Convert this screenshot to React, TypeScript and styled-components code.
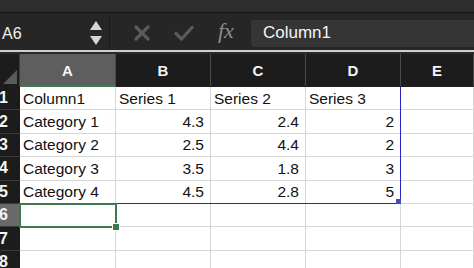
import React from 'react'
import styled, { createGlobalStyle } from 'styled-components'

const GlobalStyle = createGlobalStyle`
  html, body {
    margin: 0;
    padding: 0;
    background: #ffffff;
    overflow: hidden;
  }
  body {
    font-family: 'Liberation Sans', Arial, sans-serif;
  }
`

const COLS = ['A', 'B', 'C', 'D', 'E']

const rows: { label: string; cells: { text: string; num?: boolean }[] }[] = [
  { label: '1', cells: [{ text: 'Column1' }, { text: 'Series 1' }, { text: 'Series 2' }, { text: 'Series 3' }, { text: '' }] },
  { label: '2', cells: [{ text: 'Category 1' }, { text: '4.3', num: true }, { text: '2.4', num: true }, { text: '2', num: true }, { text: '' }] },
  { label: '3', cells: [{ text: 'Category 2' }, { text: '2.5', num: true }, { text: '4.4', num: true }, { text: '2', num: true }, { text: '' }] },
  { label: '4', cells: [{ text: 'Category 3' }, { text: '3.5', num: true }, { text: '1.8', num: true }, { text: '3', num: true }, { text: '' }] },
  { label: '5', cells: [{ text: 'Category 4' }, { text: '4.5', num: true }, { text: '2.8', num: true }, { text: '5', num: true }, { text: '' }] },
  { label: '6', cells: [{ text: '' }, { text: '' }, { text: '' }, { text: '' }, { text: '' }] },
  { label: '7', cells: [{ text: '' }, { text: '' }, { text: '' }, { text: '' }, { text: '' }] },
  { label: '8', cells: [{ text: '' }, { text: '' }, { text: '' }, { text: '' }, { text: '' }] },
]

const App = () => (
  <>
    <GlobalStyle />
    <Window>
      <TopStrip />
      <FormulaBar>
        <NameBox>
          <NameText>A6</NameText>
          <Spinner>
            <svg width="12" height="9" viewBox="0 0 12 9"><polygon points="6,0 12,9 0,9" fill="#d6d6d6" /></svg>
            <svg width="12" height="9" viewBox="0 0 12 9"><polygon points="0,0 12,0 6,9" fill="#d6d6d6" /></svg>
          </Spinner>
        </NameBox>
        <Actions>
          <IconSlot>
            <svg width="18" height="18" viewBox="0 0 18 18">
              <path d="M3 3 L15 15 M15 3 L3 15" stroke="#5b5b5b" strokeWidth="3.2" strokeLinecap="round" />
            </svg>
          </IconSlot>
          <IconSlot>
            <svg width="20" height="18" viewBox="0 0 20 18">
              <path d="M2 9.5 L7.5 15 L18 3.5" stroke="#5b5b5b" strokeWidth="3.2" fill="none" strokeLinecap="round" strokeLinejoin="round" />
            </svg>
          </IconSlot>
          <FxLabel>fx</FxLabel>
        </Actions>
        <FormulaInput>Column1</FormulaInput>
      </FormulaBar>
      <Divider />
      <Sheet>
        <Grid>
          <Corner>
            <svg width="14" height="14" viewBox="0 0 14 14"><polygon points="14,0 14,14 0,14" fill="#5a5a5a" /></svg>
          </Corner>
          {COLS.map((c) => (
            <ColHeader key={c} active={c === 'A'}>{c}</ColHeader>
          ))}
          {rows.map((r) => (
            <React.Fragment key={r.label}>
              <RowHeader active={r.label === '6'}>{r.label}</RowHeader>
              {r.cells.map((cell, i) => (
                <Cell key={i} num={!!cell.num}>{cell.text}</Cell>
              ))}
            </React.Fragment>
          ))}
        </Grid>
        <TableRange>
          <RangeHandle />
        </TableRange>
        <Selection>
          <FillHandle />
        </Selection>
      </Sheet>
    </Window>
  </>
)

const Window = styled.div`
  width: 474px;
  height: 268px;
  overflow: hidden;
  display: flex;
  flex-direction: column;
  background: #ffffff;
`

const TopStrip = styled.div`
  height: 12px;
  flex: none;
  background: #2d2d2d;
  border-bottom: 1px solid #161616;
`

const FormulaBar = styled.div`
  height: 37px;
  flex: none;
  display: flex;
  align-items: center;
  background: #262626;
`

const NameBox = styled.div`
  width: 110px;
  height: 100%;
  box-sizing: border-box;
  display: flex;
  align-items: center;
  justify-content: space-between;
  padding: 0 7px 0 2px;
  border-right: 1px solid #1b1b1b;
`

const NameText = styled.span`
  color: #f2f2f2;
  font-size: 16px;
  padding-top: 4px;
`

const Spinner = styled.div`
  display: flex;
  flex-direction: column;
  gap: 6px;
  padding-top: 2px;
  svg {
    display: block;
  }
`

const Actions = styled.div`
  display: flex;
  align-items: center;
  height: 100%;
  padding-left: 23px;
  padding-top: 2px;
`

const IconSlot = styled.div`
  width: 41px;
  display: flex;
  align-items: center;
  svg {
    display: block;
  }
`

const FxLabel = styled.span`
  font-family: 'Liberation Serif', 'Times New Roman', serif;
  font-style: italic;
  font-size: 22px;
  color: #8c8c8c;
  margin-left: 3px;
  width: 33px;
  padding-bottom: 3px;
`

const FormulaInput = styled.div`
  flex: 1;
  height: 27px;
  margin-top: 3px;
  box-sizing: border-box;
  display: flex;
  align-items: center;
  padding-left: 12px;
  background: #353535;
  border-radius: 3px 0 0 3px;
  color: #f4f4f4;
  font-size: 17px;
`

const Divider = styled.div`
  height: 2px;
  flex: none;
  background: #cfcfcf;
  border-bottom: 2px solid #2a2a2a;
`

const Sheet = styled.div`
  position: relative;
  flex: 1;
  overflow: hidden;
`

const Grid = styled.div`
  display: grid;
  grid-template-columns: 20px 96px 95px 95px 95px 1fr;
  grid-template-rows: 33px repeat(8, 23.4px);
`

const Corner = styled.div`
  background: #1c1c1c;
  border-right: 1px solid #3c3c3c;
  display: flex;
  align-items: flex-end;
  justify-content: flex-end;
  padding: 0 2px 3px 0;
  svg {
    display: block;
  }
`

const ColHeader = styled.div<{ active: boolean }>`
  background: ${(p) => (p.active ? '#5e5e5e' : '#1c1c1c')};
  border-right: 1px solid #4a4a4a;
  border-bottom: 2px solid ${(p) => (p.active ? '#3b7c4e' : '#1c1c1c')};
  box-sizing: border-box;
  color: #f4f4f4;
  font-weight: bold;
  font-size: 15px;
  display: flex;
  align-items: center;
  justify-content: center;
  padding-top: 2px;
`

const RowHeader = styled.div<{ active: boolean }>`
  background: ${(p) => (p.active ? '#6a6a6a' : '#1c1c1c')};
  border-bottom: 1px solid #3a3a3a;
  box-sizing: border-box;
  color: #f4f4f4;
  font-weight: bold;
  font-size: 16px;
  display: flex;
  align-items: center;
  justify-content: flex-end;
  padding-right: 12px;
  overflow: hidden;
  white-space: nowrap;
`

const Cell = styled.div<{ num: boolean }>`
  border-right: 1px solid #d6d6d6;
  border-bottom: 1px solid #d6d6d6;
  box-sizing: border-box;
  color: #111111;
  font-size: 15.5px;
  display: flex;
  align-items: center;
  justify-content: ${(p) => (p.num ? 'flex-end' : 'flex-start')};
  padding: 1px 6px 0 3px;
  white-space: nowrap;
  overflow: hidden;
`

const TableRange = styled.div`
  position: absolute;
  left: 20px;
  top: 33px;
  width: 381px;
  height: 117px;
  box-sizing: border-box;
  border-right: 1.5px solid #2424c8;
  border-bottom: 1.5px solid #2424c8;
  pointer-events: none;
`

const RangeHandle = styled.div`
  position: absolute;
  right: -1px;
  bottom: -1px;
  width: 5px;
  height: 5px;
  background: #4b4bb0;
`

const Selection = styled.div`
  position: absolute;
  left: 19px;
  top: 149px;
  width: 98px;
  height: 25px;
  box-sizing: border-box;
  border: 2px solid #3b7a4d;
  pointer-events: none;
`

const FillHandle = styled.div`
  position: absolute;
  right: -5px;
  bottom: -5px;
  width: 6px;
  height: 6px;
  background: #3b7a4d;
  border: 1px solid #ffffff;
`

export default App
